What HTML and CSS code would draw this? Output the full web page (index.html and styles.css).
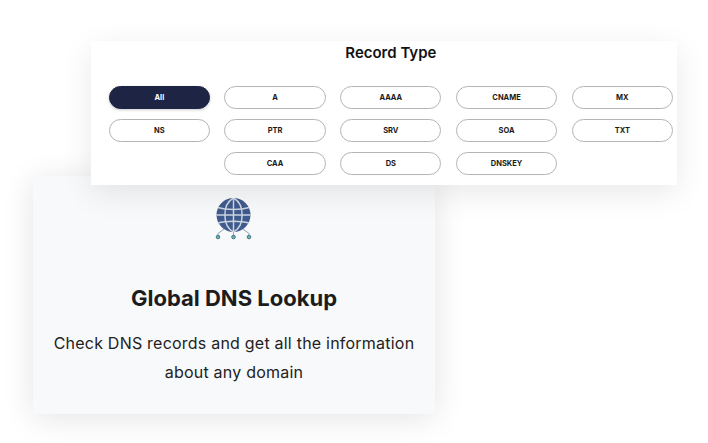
FILE: index.html
```html
<!DOCTYPE html>
<html lang="en">
<head>
<meta charset="utf-8">
<title>Global DNS Lookup</title>
<link rel="stylesheet" href="styles.css">
</head>
<body>
<div class="stage">
  <section class="lookup-card">
    <svg class="globe" width="40" height="42" viewBox="0 0 40 42" aria-hidden="true">
      <g fill="none" stroke="#8fa6b4" stroke-width="1">
        <path d="M4 38V35.5L10 31"/>
        <path d="M19.5 38V30"/>
        <path d="M35 38V35.5L29 31"/>
      </g>
      <g fill="#62bda3" stroke="#4a7390" stroke-width="1">
        <circle cx="4" cy="39" r="1.8"/>
        <circle cx="19.5" cy="39" r="1.8"/>
        <circle cx="35" cy="39" r="1.8"/>
      </g>
      <circle cx="19.5" cy="17" r="17" fill="#3f5a8c"/>
      <g fill="none" stroke="#ccd4e0" stroke-width="1.5">
        <path d="M19.5 0V34"/>
        <path d="M19.5 0C8 6 8 28 19.5 34"/>
        <path d="M19.5 0C31 6 31 28 19.5 34"/>
        <path d="M4 9.5C12 12 27 12 35 9.5"/>
        <path d="M2.5 17H36.5"/>
        <path d="M4 25C12 22.5 27 22.5 35 25"/>
      </g>
    </svg>
    <h2 class="lookup-title">Global DNS Lookup</h2>
    <p class="lookup-text">Check DNS records and get all the information about any domain</p>
  </section>
  <section class="record-card">
    <h3 class="record-title">Record Type</h3>
    <div class="pills">
      <span class="pill pill-active">All</span>
      <span class="pill">A</span>
      <span class="pill">AAAA</span>
      <span class="pill">CNAME</span>
      <span class="pill">MX</span>
      <span class="pill">NS</span>
      <span class="pill">PTR</span>
      <span class="pill">SRV</span>
      <span class="pill">SOA</span>
      <span class="pill">TXT</span>
      <span class="pill pill-skip">CAA</span>
      <span class="pill">DS</span>
      <span class="pill">DNSKEY</span>
    </div>
  </section>
</div>
</body>
</html>
```
FILE: styles.css
```css
* { box-sizing: border-box; }
html, body { margin: 0; padding: 0; background: #fff; }
body { font-family: Inter, "Liberation Sans", sans-serif; color: #1a1a1a; }
.stage { position: relative; width: 708px; height: 443px; overflow: hidden; }
.lookup-card {
  position: absolute; left: 33px; top: 176px; width: 402px; height: 238px;
  background: #f8f9fb;
  box-shadow: 0 4px 30px rgba(0, 0, 0, 0.11);
  display: flex; flex-direction: column; align-items: center;
  padding-top: 22px;
}
.globe { display: block; }
.lookup-title {
  margin: 43px 0 0; font-size: 22px; line-height: 30px; font-weight: 700; color: #1c1c1c;
}
.lookup-text {
  margin: 16px 0 0; width: 380px; text-align: center;
  font-size: 16px; line-height: 29px; font-weight: 400; color: #222;
  letter-spacing: 0.22px;
}
.record-card {
  position: absolute; left: 91px; top: 41px; width: 586px; height: 144px;
  background: #fff;
  box-shadow: 0 8px 30px rgba(0, 0, 0, 0.09);
  padding: 2px 4px 0 17.7px;
}
.record-title {
  margin: 0; text-align: center; font-size: 15px; line-height: 20px; font-weight: 600; color: #111;
}
.pills {
  margin-top: 23px;
  display: grid; grid-template-columns: repeat(5, 101.3px); column-gap: 14.45px; row-gap: 10px;
}
.pill {
  height: 23px; border: 1px solid #b4b4b4; border-radius: 12px; background: #fff;
  display: flex; align-items: center; justify-content: center;
  font-size: 7.5px; font-weight: 700; color: #1a1a1a;
}
.pill-active {
  background: #1e2444; border-color: #1e2444; color: #fff;
  box-shadow: 0 1px 3px rgba(0, 0, 0, 0.2);
}
.pill-skip { grid-column-start: 2; }
```
